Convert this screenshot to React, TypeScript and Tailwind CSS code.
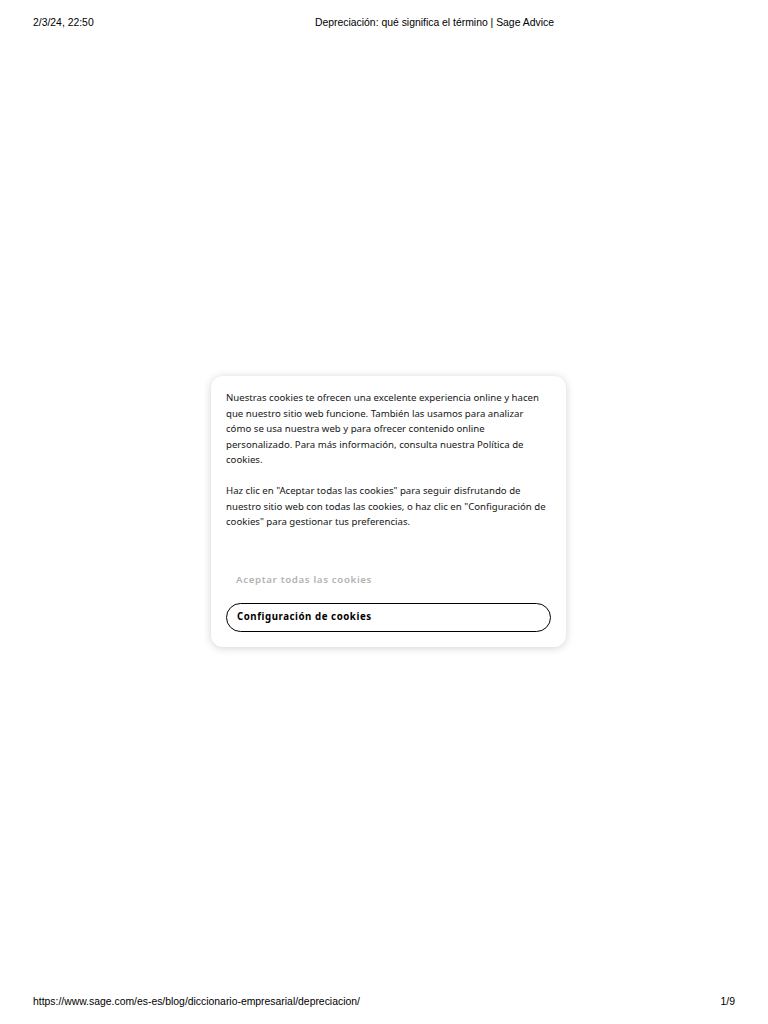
export default function App() {
  return (
    <div className="flex h-[1024px] w-[768px] flex-col bg-white">
      <header className="flex h-[44px] items-center px-[33px] pt-[1px] font-['Liberation_Sans',Arial,sans-serif] text-[10.4px] text-black">
        <span className="w-[282px]">2/3/24, 22:50</span>
        <span>Depreciación: qué significa el término | Sage Advice</span>
      </header>

      <main className="flex flex-1 flex-col items-center pt-[332px]">
        <div className="ml-[9px] w-[355px] rounded-[12px] bg-white px-[15px] pt-[14px] pb-[15px] font-['Noto_Sans',sans-serif] shadow-[0_1px_8px_rgba(0,0,0,0.18)]">
          <p className="whitespace-nowrap text-[9.65px] leading-[15.5px] text-[#161616]">
            Nuestras cookies te ofrecen una excelente experiencia online y hacen
            <br />
            que nuestro sitio web funcione. También las usamos para analizar
            <br />
            cómo se usa nuestra web y para ofrecer contenido online
            <br />
            personalizado. Para más información, consulta nuestra Política de
            <br />
            cookies.
          </p>
          <p className="mt-[15.5px] whitespace-nowrap text-[9.65px] leading-[15.5px] text-[#161616]">
            Haz clic en "Aceptar todas las cookies" para seguir disfrutando de
            <br />
            nuestro sitio web con todas las cookies, o haz clic en "Configuración de
            <br />
            cookies" para gestionar tus preferencias.
          </p>
          <div className="mt-[36px] flex flex-col gap-[8px]">
            <button className="flex h-[29px] items-center px-[10px] text-left text-[9.7px] font-semibold tracking-[0.65px] text-[#b3b3b3]">
              Aceptar todas las cookies
            </button>
            <button className="flex h-[29px] items-center rounded-full border-[1.5px] border-black px-[10px] text-left text-[9.7px] font-bold tracking-[0.55px] text-black">
              Configuración de cookies
            </button>
          </div>
        </div>
      </main>

      <footer className="flex h-[44px] items-start justify-between px-[33px] pt-[14px] font-['Liberation_Sans',Arial,sans-serif] text-[10.4px] text-black">
        <span>https://www.sage.com/es-es/blog/diccionario-empresarial/depreciacion/</span>
        <span>1/9</span>
      </footer>
    </div>
  );
}
